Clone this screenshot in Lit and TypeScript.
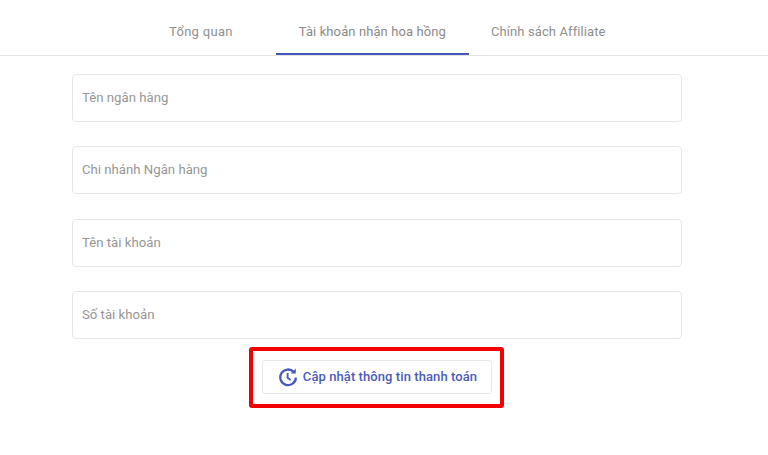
import { LitElement, html, css } from "lit";
import { customElement } from "lit/decorators.js";

@customElement("app-root")
export class AppRoot extends LitElement {
  static styles = css`
    :host { display: block; width: 768px; height: 455px; background: #fff; font-family: Roboto, "Noto Sans", sans-serif; overflow: hidden; }
    .tabs { display: flex; height: 55.5px; box-sizing: border-box; border-bottom: 1px solid #e4e4e4; padding-left: 147px; }
    .tab { font-size: 13px; letter-spacing: 0.1px; color: #8f8f8f; padding: 24px 22px 0; height: 55px; box-sizing: border-box; white-space: nowrap; line-height: 15px; }
    .tab.first { letter-spacing: 0.3px; margin-right: 21px; }
    .tab.active { border-bottom: 2px solid #4355b9; color: #8a8a8a; padding-left: 23px; padding-right: 23px; }
    .form { display: flex; flex-direction: column; gap: 24.5px; padding: 18px 86px 0 71.5px; }
    .field { height: 48px; box-sizing: border-box; border: 1px solid #e6e6e6; border-radius: 4px; padding-left: 9.5px; padding-bottom: 1px; display: flex; align-items: center; font-size: 13.2px; color: #969696; }
    .action { display: flex; justify-content: center; margin-top: 8px; padding-right: 16px; }
    .frame { border: 4px solid #f50000; border-radius: 3px; padding: 9px 7.5px 10px 9.5px; }
    .btn { width: 230px; height: 34px; box-sizing: border-box; border: 1px solid #e4e6ec; border-radius: 3px; display: flex; align-items: center; justify-content: center; gap: 5px; color: #4a5bbd; font-size: 13px; font-weight: 500; letter-spacing: 0.08px; padding-left: 1px; padding-bottom: 1px; }
    svg { width: 20px; height: 20px; flex: none; }
  `;
  render() {
    return html`
      <div class="tabs">
        <div class="tab first">Tổng quan</div>
        <div class="tab active">Tài khoản nhận hoa hồng</div>
        <div class="tab">Chính sách Affiliate</div>
      </div>
      <div class="form">
        <div class="field">Tên ngân hàng</div>
        <div class="field">Chi nhánh Ngân hàng</div>
        <div class="field">Tên tài khoản</div>
        <div class="field">Số tài khoản</div>
      </div>
      <div class="action">
        <div class="frame">
          <div class="btn">
            <svg viewBox="0 0 20 20" fill="none" stroke="#4a5bbd" stroke-width="2.3">
              <path d="M15.8 5A7.8 7.8 0 1 0 17.9 10.6"/>
              <path d="M17.8 1.4v5.2h-5.2" fill="#4a5bbd" stroke="none"/>
              <path d="M9.6 6v4.8l3 2.2" stroke-width="1.9"/>
            </svg>
            <span>Cập nhật thông tin thanh toán</span>
          </div>
        </div>
      </div>
    `;
  }
}
